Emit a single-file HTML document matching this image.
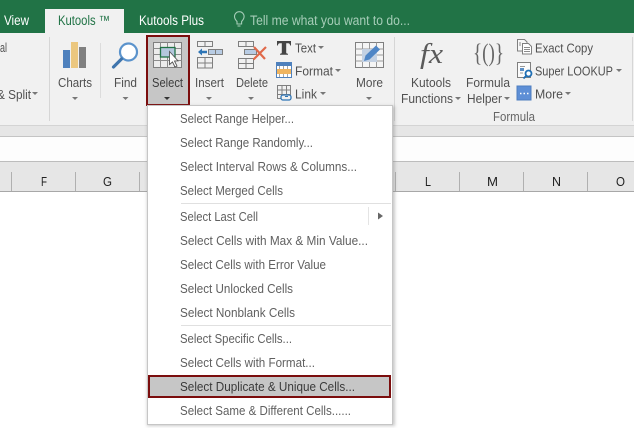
<!DOCTYPE html>
<html><head><meta charset="utf-8"><style>
html,body{margin:0;padding:0;background:#fff;width:634px;height:428px;overflow:hidden}
svg{display:block}
text{font-family:"Liberation Sans",sans-serif;font-size:13px;fill:#505050}
.m{fill:#606060}
.t{font-size:13.500px;fill:#fff}
.h{fill:#222}
</style></head><body>
<svg width="634" height="428" viewBox="0 0 634 428" xmlns="http://www.w3.org/2000/svg">
<defs>
<filter id="sh" x="-5%" y="-5%" width="110%" height="110%"><feGaussianBlur stdDeviation="1.500"/></filter>
<path id="c" d="M-3 0h6l-3 3z" fill="#777"/>
</defs>
<rect width="634" height="428" fill="#fff"/>
<rect width="634" height="33" fill="#217346"/>
<rect x="45" y="9" width="79" height="24" fill="#f1f1f1"/>
<rect y="33" width="634" height="92" fill="#f1f1f1"/>
<rect y="125" width="634" height="11" fill="#e6e6e6"/>
<rect y="125" width="634" height="1" fill="#d4d4d4"/>
<rect y="136" width="634" height="1" fill="#c4c4c4"/>
<rect y="137" width="634" height="24" fill="#fdfdfd"/>
<rect y="161" width="634" height="1" fill="#bdbdbd"/>
<rect y="162" width="634" height="29" fill="#e6e6e6"/>
<rect y="191" width="634" height="1" fill="#a8a8a8"/>
<g fill="#b0b0b0"><rect x="11" y="172" width="1" height="19"/><rect x="75" y="172" width="1" height="19"/><rect x="139" y="172" width="1" height="19"/><rect x="395" y="172" width="1" height="19"/><rect x="459" y="172" width="1" height="19"/><rect x="523" y="172" width="1" height="19"/><rect x="587" y="172" width="1" height="19"/></g>
<text class="h" x="41" y="186" textLength="6" lengthAdjust="spacingAndGlyphs">F</text>
<text class="h" x="103" y="186" textLength="9" lengthAdjust="spacingAndGlyphs">G</text>
<text class="h" x="425" y="186" textLength="6" lengthAdjust="spacingAndGlyphs">L</text>
<text class="h" x="487" y="186" textLength="11" lengthAdjust="spacingAndGlyphs">M</text>
<text class="h" x="552" y="186" textLength="9" lengthAdjust="spacingAndGlyphs">N</text>
<text class="h" x="616" y="186" textLength="9" lengthAdjust="spacingAndGlyphs">O</text>

<!-- tabs -->
<text class="t" x="4" y="25" textLength="25" lengthAdjust="spacingAndGlyphs">View</text>
<text class="t" x="58" y="25" style="fill:#217346" textLength="52" lengthAdjust="spacingAndGlyphs">Kutools ™</text>
<text class="t" x="139" y="25" textLength="65" lengthAdjust="spacingAndGlyphs">Kutools Plus</text>
<path d="M237 24v-2.500c-1-1.200-2.500-2.500-2.500-5a4.800 4.800 0 0 1 9.600 0c0 2.500-1.500 3.800-2.500 5V24zM237.500 26h3" fill="none" stroke="#a6cdb8" stroke-width="1.100"/>
<text class="t" x="250" y="25" style="fill:#a6cdb8" textLength="160" lengthAdjust="spacingAndGlyphs">Tell me what you want to do...</text>

<!-- ribbon separators -->
<rect x="49" y="37" width="1" height="84" fill="#d6d6d6"/>
<rect x="100" y="43" width="1" height="55" fill="#dcdcdc"/>
<rect x="394" y="37" width="1" height="84" fill="#d6d6d6"/>
<rect x="632" y="37" width="1" height="84" fill="#d6d6d6"/>

<text x="0" y="52" textLength="7" lengthAdjust="spacingAndGlyphs">al</text>
<text x="-3" y="99" textLength="34" lengthAdjust="spacingAndGlyphs">&amp; Split</text>
<use href="#c" x="35" y="92"/>

<!-- Charts -->
<rect x="63" y="50" width="7" height="18" fill="#4f81bd"/>
<rect x="71" y="42" width="7" height="26" fill="#ebc77f"/>
<rect x="79" y="47" width="7" height="21" fill="#808080"/>
<text x="58" y="87" textLength="34" lengthAdjust="spacingAndGlyphs">Charts</text>
<use href="#c" x="75" y="97"/>

<!-- Find -->
<circle cx="128.500" cy="52" r="8.500" fill="#fff" stroke="#5b93cc" stroke-width="2.200"/>
<path d="M121.500 59L113.500 67" stroke="#3f75ad" stroke-width="3.200" stroke-linecap="round"/>
<text x="114" y="87" textLength="23" lengthAdjust="spacingAndGlyphs">Find</text>
<use href="#c" x="125.500" y="97"/>

<!-- Select button -->
<rect x="147" y="36" width="42" height="69" fill="#c6c6c6" stroke="#7b0d0d" stroke-width="2"/>
<rect x="153.500" y="42.500" width="28" height="25" fill="#ececec" stroke="#7f7f7f"/>
<path d="M153.500 48.500h28M153.500 54.500h28M153.500 60.500h28M160.500 42.500v25M167.500 42.500v25M174.500 42.500v25" stroke="#8c8c8c" fill="none"/>
<rect x="160.500" y="47.500" width="14.500" height="9.500" fill="#b4c7dd" stroke="#217346" stroke-width="1.300"/>
<path d="M169.500 51.500v13l3-2.500 2.500 5 2-1-2.500-5 3.500-.2z" fill="#fff" stroke="#555" stroke-width=".9"/>
<text x="152" y="87" style="fill:#3c3c3c" textLength="31" lengthAdjust="spacingAndGlyphs">Select</text>
<path d="M164 97h6l-3 3z" fill="#333"/>

<!-- Insert -->
<g fill="none" stroke="#7f7f7f"><path d="M197.500 41.500h15v5h-15zM205 41.500v5M197.500 57.500h15v10.500h-15zM205 57.500v10.500M197.500 63h15"/></g>
<rect x="208.500" y="49.500" width="14" height="5" fill="#b8cce4" stroke="#7f7f7f"/><path d="M215.500 49.500v5" stroke="#7f7f7f"/>
<path d="M198 52l4-3.500v2.200h5v2.600h-5v2.200z" fill="#2e75b6"/>
<text x="195" y="87" textLength="29" lengthAdjust="spacingAndGlyphs">Insert</text>
<use href="#c" x="209" y="97"/>

<!-- Delete -->
<g fill="none" stroke="#7f7f7f"><path d="M238.500 41.500h15v5h-15zM246 41.500v5M238.500 58.500h15v10h-15zM246 58.500v10M238.500 63.500h15"/></g>
<rect x="244.500" y="49.500" width="12" height="5" fill="#b8cce4" stroke="#7f7f7f"/>
<path d="M254 47l11 12M266 47l-12.500 12.500" stroke="#e0694a" stroke-width="2.200"/>
<text x="236" y="87" textLength="32" lengthAdjust="spacingAndGlyphs">Delete</text>
<use href="#c" x="251" y="97"/>

<!-- Text / Format / Link -->
<path d="M277 41h14v4.500h-.8c-.3-1.500-1-2.200-2-2.200h-2v9.200c0 .8.500 1.200 1.800 1.200v1h-8v-1c1.300 0 1.800-.4 1.800-1.200V43.300h-2c-1 0-1.700.7-2 2.200H277z" fill="#444"/>
<text x="295" y="52.500" textLength="21" lengthAdjust="spacingAndGlyphs">Text</text>
<use href="#c" x="321" y="46"/>
<rect x="276.500" y="62.500" width="15" height="15" fill="#fff" stroke="#4f81bd"/>
<rect x="277" y="63" width="14" height="3" fill="#4f81bd"/>
<path d="M279.500 66v3M283.500 66v3M287.500 66v3M279.500 74v3M283.500 74v3M287.500 74v3" stroke="#a6a6a6"/>
<rect x="277" y="69" width="14" height="5" fill="#f0b45e"/>
<text x="295" y="75.500" textLength="38" lengthAdjust="spacingAndGlyphs">Format</text>
<use href="#c" x="338" y="69"/>
<g fill="none" stroke="#7f7f7f"><path d="M277.500 85.500h13v13h-13zM277.500 90h13M277.500 94.500h13M282 85.500v13M286.500 85.500v13"/></g>
<rect x="281" y="95" width="10" height="5" rx="2" fill="#f1f1f1" stroke="#2e75b6" stroke-width="1.300"/>
<path d="M285 96.500h3" stroke="#2e75b6"/>
<text x="295" y="98.500" textLength="22" lengthAdjust="spacingAndGlyphs">Link</text>
<use href="#c" x="323" y="92"/>

<!-- More -->
<rect x="355.500" y="42.500" width="28" height="25" fill="#f5f5f5" stroke="#7f7f7f"/>
<path d="M355.500 49h28M355.500 55h28M355.500 61h28M362.500 42.500v25M369.500 42.500v25M376.500 42.500v25" stroke="#9a9a9a" fill="none"/>
<rect x="362" y="49" width="15" height="13" fill="#c3d1e3"/>
<path d="M364 61l1.500-5.500L376 45.500l4 4-10.500 10z" fill="#4f86c6"/>
<text x="356" y="87" textLength="27" lengthAdjust="spacingAndGlyphs">More</text>
<use href="#c" x="369" y="97"/>

<!-- fx -->
<text x="420" y="63" style="font-family:'Liberation Serif',serif;font-style:italic;font-size:29px;fill:#5a5a5a" textLength="23" lengthAdjust="spacingAndGlyphs">fx</text>
<text x="411" y="87" textLength="40" lengthAdjust="spacingAndGlyphs">Kutools</text>
<text x="401" y="103" textLength="52" lengthAdjust="spacingAndGlyphs">Functions</text>
<use href="#c" x="458" y="97"/>

<!-- {()} -->
<text x="473" y="61" style="font-family:'Liberation Serif',serif;font-size:25px;fill:#666" textLength="31" lengthAdjust="spacingAndGlyphs">{()}</text>
<text x="466" y="87" textLength="44" lengthAdjust="spacingAndGlyphs">Formula</text>
<text x="467" y="103" textLength="35" lengthAdjust="spacingAndGlyphs">Helper</text>
<use href="#c" x="507" y="97"/>

<text x="493" y="121" style="fill:#666" textLength="42" lengthAdjust="spacingAndGlyphs">Formula</text>

<!-- Exact copy -->
<path d="M517.500 39.500h7l2.500 2.500v9h-9.500z" fill="#f8f8f8" stroke="#7f7f7f"/>
<path d="M522.500 43.500h6l3 3v7.500h-9z" fill="#fff" stroke="#7f7f7f"/>
<path d="M524 47.500h6M524 49.500h6M524 51.500h6M519 43h2M519 45h2" stroke="#8c8c8c"/>
<text x="535" y="52.500" textLength="58" lengthAdjust="spacingAndGlyphs">Exact Copy</text>

<!-- Super lookup -->
<rect x="517.500" y="62.500" width="13" height="15" fill="#fbfbfb" stroke="#7f7f7f"/>
<path d="M520 66.500h5M520 73h3" stroke="#9a9a9a"/>
<rect x="520" y="68" width="4" height="3" fill="#5b8ec4"/>
<circle cx="528.500" cy="73.500" r="3" fill="#fff" stroke="#1f6fb5" stroke-width="1.800"/>
<path d="M526 76l-2.500 2.500" stroke="#1f6fb5" stroke-width="1.800"/>
<text x="535" y="75.500" textLength="78" lengthAdjust="spacingAndGlyphs">Super LOOKUP</text>
<use href="#c" x="619" y="69"/>

<!-- More -->
<rect x="517" y="86" width="14" height="14" fill="#5e8fd6" stroke="#4f7ec0"/>
<path d="M520 93.500h1.500M523.500 93.500h1.500M527 93.500h1.500" stroke="#fff" stroke-width="1.500"/>
<text x="535" y="98.500" textLength="28" lengthAdjust="spacingAndGlyphs">More</text>
<use href="#c" x="568" y="92"/>

<!-- menu -->
<rect x="147" y="106" width="248" height="320" fill="#888" opacity=".45" filter="url(#sh)"/>
<rect x="147.500" y="105.500" width="245" height="319" fill="#fff" stroke="#c6c6c6"/>
<rect x="181" y="203" width="210" height="1" fill="#e0e0e0"/>
<rect x="181" y="325" width="210" height="1" fill="#e0e0e0"/>
<rect x="368" y="207" width="1" height="18" fill="#e4e4e4"/>
<path d="M378 212.500l5 3.500-5 3.500z" fill="#666"/>
<rect x="149" y="376" width="241" height="21" fill="#c6c6c6" stroke="#7b0d0d" stroke-width="2"/>

<text class="m" x="180" y="123" textLength="114" lengthAdjust="spacingAndGlyphs">Select Range Helper...</text>
<text class="m" x="180" y="147" textLength="133" lengthAdjust="spacingAndGlyphs">Select Range Randomly...</text>
<text class="m" x="180" y="171" textLength="177" lengthAdjust="spacingAndGlyphs">Select Interval Rows &amp; Columns...</text>
<text class="m" x="180" y="195" textLength="103" lengthAdjust="spacingAndGlyphs">Select Merged Cells</text>
<text class="m" x="180" y="221" textLength="78" lengthAdjust="spacingAndGlyphs">Select Last Cell</text>
<text class="m" x="180" y="245" textLength="188" lengthAdjust="spacingAndGlyphs">Select Cells with Max &amp; Min Value...</text>
<text class="m" x="180" y="269" textLength="146" lengthAdjust="spacingAndGlyphs">Select Cells with Error Value</text>
<text class="m" x="180" y="293" textLength="113" lengthAdjust="spacingAndGlyphs">Select Unlocked Cells</text>
<text class="m" x="180" y="317" textLength="115" lengthAdjust="spacingAndGlyphs">Select Nonblank Cells</text>
<text class="m" x="180" y="343" textLength="112" lengthAdjust="spacingAndGlyphs">Select Specific Cells...</text>
<text class="m" x="180" y="367" textLength="135" lengthAdjust="spacingAndGlyphs">Select Cells with Format...</text>
<text x="180" y="391" style="fill:#3a3a3a" textLength="175" lengthAdjust="spacingAndGlyphs">Select Duplicate &amp; Unique Cells...</text>
<text class="m" x="180" y="415" textLength="171" lengthAdjust="spacingAndGlyphs">Select Same &amp; Different Cells......</text>
</svg>
</body></html>
